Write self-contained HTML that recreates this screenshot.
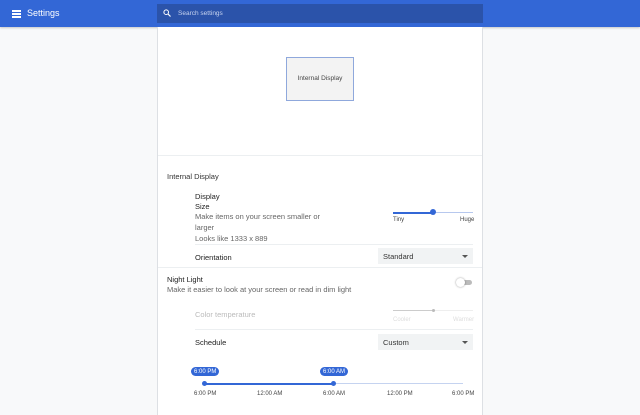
<!DOCTYPE html>
<html><head><style>
*{margin:0;padding:0;box-sizing:border-box}
html,body{width:640px;height:415px;overflow:hidden}
body{background:#f8f9fa;font-family:"Liberation Sans",sans-serif;font-size:7.5px;color:#333;position:relative}
.a{position:absolute}
.hdr{left:0;top:0;width:640px;height:27px;background:#3367d6;box-shadow:0 1px 2px rgba(0,0,0,.2)}
.card{left:157px;top:27px;width:326px;height:388px;background:#fff;border-left:1px solid #dde0e4;border-right:1px solid #dde0e4}
.sep{height:1px;background:#eceff1}
.dd{background:#f1f3f4;height:16px;width:95px;left:378px;padding:4px 0 0 5px}
.dd:after{content:"";position:absolute;right:5px;top:7px;border-left:3px solid transparent;border-right:3px solid transparent;border-top:3px solid #555}
.pill{background:#3367d6;color:#fff;font-size:6px;border-radius:5px;height:9px;padding:1.5px 3px 0;line-height:7px}
.dot{width:6px;height:6px;border-radius:50%;background:#3367d6}
</style></head><body>
<div class="a hdr"></div>
<div class="a" style="left:12px;top:10px;width:9px;height:1.5px;background:#fff;box-shadow:0 3px 0 #fff,0 6px 0 #fff"></div>
<div class="a" style="left:27px;top:8px;color:#fff;font-size:9px">Settings</div>
<div class="a" style="left:157px;top:4px;width:326px;height:19px;background:#2b53aa"></div>
<svg class="a" style="left:163px;top:9px" width="8" height="8" viewBox="0 0 8 8"><circle cx="3.2" cy="3.2" r="2.3" fill="none" stroke="#fff" stroke-width="1"/><path d="M5 5L7.5 7.5" stroke="#fff" stroke-width="1.2"/></svg>
<div class="a" style="left:178px;top:10px;color:#c7d3ef;font-size:6.5px">Search settings</div>
<div class="a card"></div>
<div class="a" style="left:286px;top:57px;width:68px;height:44px;background:#f3f3f3;border:1px solid #8fa8dc;text-align:center;padding-top:17px;font-size:6.5px;color:#444">Internal Display</div>
<div class="a sep" style="left:158px;top:155px;width:324px"></div>
<div class="a" style="left:167px;top:172px">Internal Display</div>
<div class="a" style="left:195px;top:192px;color:#222">Display</div>
<div class="a" style="left:195px;top:202px;color:#222">Size</div>
<div class="a" style="left:195px;top:212px;color:#666">Make items on your screen smaller or</div>
<div class="a" style="left:195px;top:223px;color:#666">larger</div>
<div class="a" style="left:195px;top:234px;color:#666">Looks like 1333 x 889</div>
<div class="a" style="left:393px;top:212px;width:40px;height:1.5px;background:#3367d6"></div>
<div class="a" style="left:433px;top:212px;width:40px;height:1px;background:#b7c8ee"></div>
<div class="a dot" style="left:430px;top:209px"></div>
<div class="a" style="left:393px;top:217px;color:#444;font-size:6px">Tiny</div>
<div class="a" style="left:460px;top:217px;color:#444;font-size:6px">Huge</div>
<div class="a sep" style="left:195px;top:244px;width:278px"></div>
<div class="a" style="left:195px;top:253px;color:#222">Orientation</div>
<div class="a dd" style="top:248px">Standard</div>
<div class="a sep" style="left:158px;top:267px;width:324px"></div>
<div class="a" style="left:167px;top:275px;color:#222">Night Light</div>
<div class="a" style="left:167px;top:285px;color:#666">Make it easier to look at your screen or read in dim light</div>
<div class="a" style="left:459px;top:280px;width:13px;height:5px;border-radius:3px;background:#bbb"></div>
<div class="a" style="left:456px;top:278px;width:9px;height:9px;border-radius:50%;background:#fff;box-shadow:0 0 2px rgba(0,0,0,.4)"></div>
<div class="a" style="left:195px;top:310px;color:#bbb">Color temperature</div>
<div class="a" style="left:393px;top:310px;width:40px;height:1px;background:#ccc"></div>
<div class="a" style="left:433px;top:310px;width:40px;height:1px;background:#eee"></div>
<div class="a" style="left:432px;top:309px;width:3px;height:3px;border-radius:50%;background:#bbb"></div>
<div class="a" style="left:393px;top:317px;color:#ddd;font-size:6px">Cooler</div>
<div class="a" style="left:453px;top:317px;color:#ddd;font-size:6px">Warmer</div>
<div class="a sep" style="left:195px;top:329px;width:278px"></div>
<div class="a" style="left:195px;top:338px;color:#222">Schedule</div>
<div class="a dd" style="top:334px">Custom</div>
<div class="a pill" style="left:191px;top:367px">6:00 PM</div>
<div class="a pill" style="left:320px;top:367px">6:00 AM</div>
<div class="a" style="left:205px;top:383px;width:129px;height:1.5px;background:#3367d6"></div>
<div class="a" style="left:334px;top:383px;width:129px;height:1px;background:#c5d3f0"></div>
<div class="a dot" style="left:202px;top:381px;width:5px;height:5px"></div>
<div class="a dot" style="left:331px;top:381px;width:5px;height:5px"></div>
<div class="a" style="left:194px;top:391px;color:#444;font-size:6px">6:00 PM</div>
<div class="a" style="left:257px;top:391px;color:#444;font-size:6px">12:00 AM</div>
<div class="a" style="left:323px;top:391px;color:#444;font-size:6px">6:00 AM</div>
<div class="a" style="left:387px;top:391px;color:#444;font-size:6px">12:00 PM</div>
<div class="a" style="left:452px;top:391px;color:#444;font-size:6px">6:00 PM</div>
</body></html>
